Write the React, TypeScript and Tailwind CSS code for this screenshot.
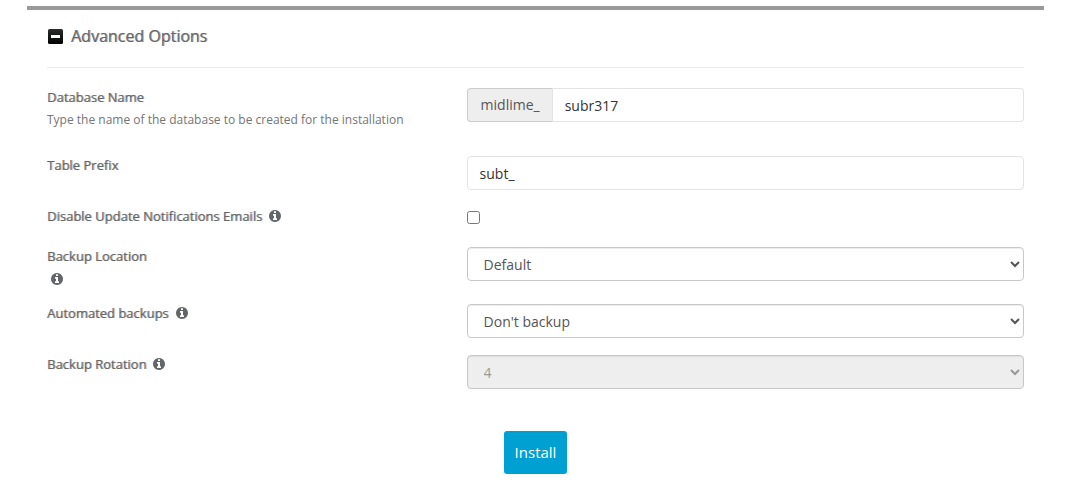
import { useState } from 'react'
import type { ReactNode } from 'react'

type RowProps = {
  id: string
  label: string
  className: string
  info?: boolean
  infoBelow?: boolean
  hint?: string
  children: ReactNode
}

function InfoIcon({ className = '' }: { className?: string }) {
  return (
    <svg viewBox="0 0 1536 1536" fill="currentColor" className={`size-3 text-[#626669] ${className}`} aria-hidden="true">
      <path d="M1024 1248v-160q0-14-9-23t-23-9h-96v-512q0-14-9-23t-23-9h-320q-14 0-23 9t-9 23v160q0 14 9 23t23 9h96v320h-96q-14 0-23 9t-9 23v160q0 14 9 23t23 9h448q14 0 23-9t9-23zM896 352v-160q0-14-9-23t-23-9h-192q-14 0-23 9t-9 23v160q0 14 9 23t23 9h192q14 0 23-9t9-23zM1536 768q0 209-103 385.500t-279.500 279.500t-385.500 103t-385.500-103t-279.500-279.500t-103-385.500t103-385.500t279.500-279.500t385.500-103t385.500 103t279.500 279.500t103 385.500z" />
    </svg>
  )
}

function Row({ id, label, className, info, infoBelow, hint, children }: RowProps) {
  return (
    <div className={`grid grid-cols-12 gap-x-[30px] ${className}`}>
      <div className="col-span-5 text-[13px] leading-5">
        <div className="flex items-center gap-[7px] h-[18px]">
          <label htmlFor={id} className="text-[#666] [text-shadow:1px_0_0_rgba(102,102,102,0.55)]">{label}</label>
          {info && <InfoIcon />}
        </div>
        {infoBelow && <InfoIcon className="mt-2 ml-1" />}
        {hint && <p id={`${id}-hint`} className="mt-1 text-[12px] text-[#757575]">{hint}</p>}
      </div>
      <div className="col-span-7">{children}</div>
    </div>
  )
}

const inputClass = 'h-[34px] border border-[#e3e3e3] bg-white px-3 text-[14px] text-[#333] outline-none'

function Select({ id, value, options, onChange, disabled }: {
  id: string
  value: string
  options: string[]
  onChange?: (v: string) => void
  disabled?: boolean
}) {
  return (
    <select
      id={id}
      value={value}
      disabled={disabled}
      onChange={(e) => onChange?.(e.target.value)}
      className="block w-full h-[34px] rounded border border-[#c8c8c8] bg-white pl-3 pr-px text-[14px] text-[#555] shadow-[inset_0_1px_1px_rgba(0,0,0,0.075)] disabled:bg-[#eee] disabled:opacity-100 disabled:text-[#999]"
    >
      {options.map((o) => <option key={o}>{o}</option>)}
    </select>
  )
}

export default function App() {
  const [open, setOpen] = useState(true)
  const [dbName, setDbName] = useState('subr317')
  const [prefix, setPrefix] = useState('subt_')
  const [noEmails, setNoEmails] = useState(false)
  const [location, setLocation] = useState('Default')
  const [schedule, setSchedule] = useState("Don't backup")

  return (
    <main className="pt-[6px] pl-[27px] pr-[30px] pb-4 bg-white font-['Open_Sans',sans-serif]">
      <form className="border-t-4 border-[#999] px-5" onSubmit={(e) => e.preventDefault()}>
        <h2 className="pt-[14px] pb-[19px] border-b border-[#ebebeb]">
          <button
            type="button"
            aria-expanded={open}
            onClick={() => setOpen(!open)}
            className="flex items-center gap-2 h-6 pl-px text-[16px] leading-6 text-[#666] [text-shadow:1px_0_0_rgba(102,102,102,0.55)]"
          >
            <svg viewBox="0 0 15 15" className="size-[15px]" aria-hidden="true">
              <defs>
                <linearGradient id="toggle" x1="0" y1="0" x2="0" y2="1">
                  <stop offset="0" stopColor="#2b2d2d" />
                  <stop offset="1" stopColor="#000" />
                </linearGradient>
              </defs>
              <rect width="15" height="15" rx="1.5" fill="url(#toggle)" />
              <rect x="3" y="6" width="9" height="3" fill="#fff" />
              {!open && <rect x="6" y="3" width="3" height="9" fill="#fff" />}
            </svg>
            Advanced Options
          </button>
        </h2>

        {open && (
          <div className="pt-5">
            <Row id="dbname" label="Database Name" hint="Type the name of the database to be created for the installation" className="h-[68px]">
              <div className="flex">
                <span className="flex items-center h-[34px] pl-[13px] pr-3 rounded-l border border-[#ccc] border-r-[#e3e3e3] bg-[#eee] text-[14px] leading-5 text-[#555]">midlime_</span>
                <input id="dbname" type="text" aria-describedby="dbname-hint" value={dbName} onChange={(e) => setDbName(e.target.value)} className={`${inputClass} flex-1 min-w-0 rounded-r border-l-0`} />
              </div>
            </Row>
            <Row id="prefix" label="Table Prefix" className="h-[51px]">
              <input id="prefix" type="text" value={prefix} onChange={(e) => setPrefix(e.target.value)} className={`${inputClass} block w-full rounded`} />
            </Row>
            <Row id="emails" label="Disable Update Notifications Emails" info className="h-10">
              <input id="emails" type="checkbox" checked={noEmails} onChange={(e) => setNoEmails(e.target.checked)} className="block mt-1 size-[13px]" />
            </Row>
            <Row id="location" label="Backup Location" infoBelow className="h-[57px]">
              <Select id="location" value={location} onChange={setLocation} options={['Default', 'Local Folder']} />
            </Row>
            <Row id="schedule" label="Automated backups" info className="h-[51px]">
              <Select id="schedule" value={schedule} onChange={setSchedule} options={["Don't backup", 'Once a day', 'Once a week', 'Once a month']} />
            </Row>
            <Row id="rotation" label="Backup Rotation" info className="h-[34px]">
              <Select id="rotation" value="4" options={['4']} disabled />
            </Row>
          </div>
        )}

        <div className="mt-[42px] flex justify-center">
          <button type="submit" className="h-[43px] px-[11px] rounded-[3px] bg-[#00a0d2] text-[15px] text-white">Install</button>
        </div>
      </form>
    </main>
  )
}
